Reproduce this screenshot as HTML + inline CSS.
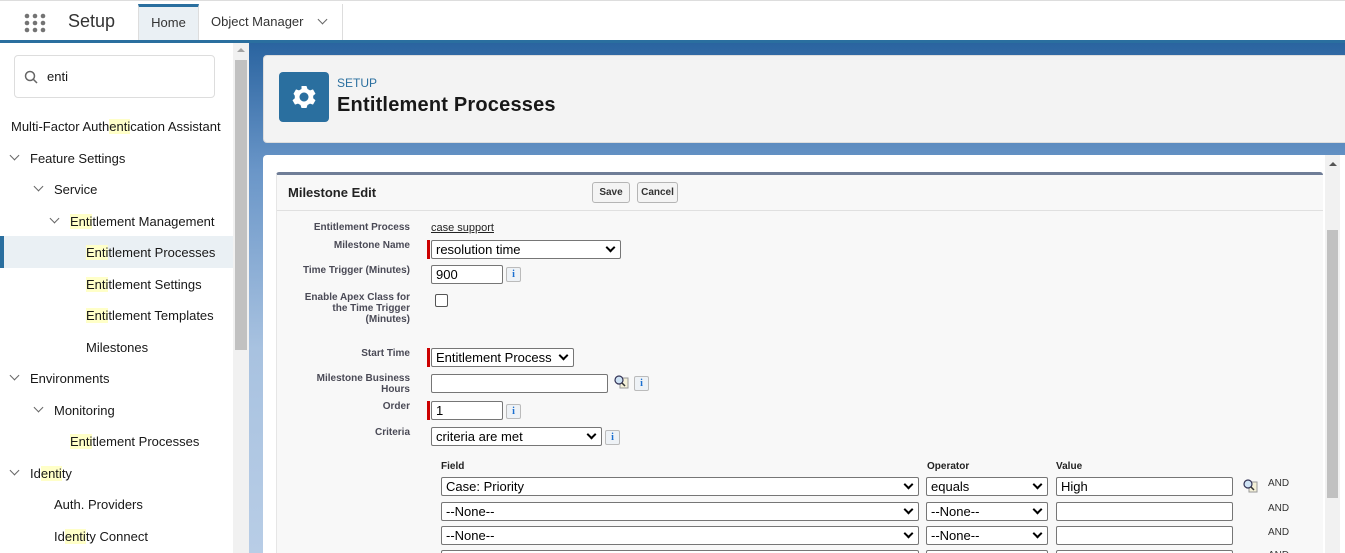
<!DOCTYPE html>
<html style="overflow:hidden;width:1345px;height:553px"><head><meta charset="utf-8"><style>
*{box-sizing:border-box;margin:0;padding:0}
body{width:1345px;height:553px;overflow:hidden;position:relative;font-family:"Liberation Sans",Arial,sans-serif;background:#fff}
.a{position:absolute}
.side{font-size:13px;color:#181818;white-space:nowrap}
.hl{background:#ffffc8}
.chev{position:absolute;width:7px;height:7px;border-right:1.3px solid #666;border-bottom:1.3px solid #666;transform:rotate(45deg)}
.lbl{position:absolute;right:935px;font-size:10px;font-weight:bold;color:#4a4a56;text-align:right;line-height:11px}
.sel,.inp{position:absolute;height:19px;border:1px solid #767676;background:#fff;font-size:13px;color:#000;padding:1px 4px;line-height:16px;border-radius:2px}
.sel::after{content:"";position:absolute;right:6px;top:3px;width:5px;height:5px;border-right:2px solid #000;border-bottom:2px solid #000;transform:rotate(45deg)}
.req{position:absolute;width:3px;height:19px;background:#c00}
.info{position:absolute;width:15px;height:15px;border:1px solid #bbb;border-radius:2px;background:#eef2f6;color:#1a6fd0;font:bold 10px "Liberation Serif",serif;text-align:center;line-height:13px}
.mag{position:absolute;width:16px;height:14px}
.and{position:absolute;left:1268px;font-size:10px;color:#333}
.hd{position:absolute;font-size:10px;font-weight:bold;color:#222}
</style></head><body>
<div class="a" style="left:0;top:0;width:1345px;height:3px;border-top:1px solid #ddd"></div>
<div class="a" style="left:24px;top:13px;width:22px;height:20px">
<svg width="22" height="20"><g fill="#747474"><circle cx="3" cy="3" r="2.3"/><circle cx="11" cy="3" r="2.3"/><circle cx="19" cy="3" r="2.3"/><circle cx="3" cy="10" r="2.3"/><circle cx="11" cy="10" r="2.3"/><circle cx="19" cy="10" r="2.3"/><circle cx="3" cy="17" r="2.3"/><circle cx="11" cy="17" r="2.3"/><circle cx="19" cy="17" r="2.3"/></g></svg></div>
<div class="a" style="left:68px;top:11px;font-size:18px;color:#333">Setup</div>
<div class="a" style="left:138px;top:4px;width:61px;height:36px;background:#eaf0f4;border-top:3px solid #2a6f9f;border-left:1px solid #ddd;border-right:1px solid #ddd;font-size:13px;color:#333;text-align:center;line-height:32px">Home</div>
<div class="a" style="left:199px;top:4px;width:144px;height:36px;border-right:1px solid #ddd;font-size:13px;color:#333;line-height:36px;padding-left:12px">Object Manager</div>
<div class="chev" style="left:319px;top:16px"></div>
<div class="a" style="left:0;top:40px;width:1345px;height:3px;background:#2a6f9f"></div>
<div class="a" style="left:14px;top:55px;width:201px;height:43px;border:1px solid #ddd;border-radius:4px"></div>
<svg class="a" style="left:24px;top:70px" width="14" height="14"><circle cx="6" cy="6" r="4.5" fill="none" stroke="#666" stroke-width="1.5"/><line x1="9.5" y1="9.5" x2="13" y2="13" stroke="#666" stroke-width="1.5"/></svg>
<div class="a side" style="left:47px;top:69px">enti</div>
<div class="a side" style="left:11px;top:119px">Multi-Factor Auth<span class="hl">enti</span>cation Assistant</div>
<div class="chev" style="left:11px;top:152px"></div><div class="a side" style="left:30px;top:151px">Feature Settings</div>
<div class="chev" style="left:35px;top:183px"></div><div class="a side" style="left:54px;top:182px">Service</div>
<div class="chev" style="left:51px;top:215px"></div><div class="a side" style="left:70px;top:214px"><span class="hl">Enti</span>tlement Management</div>
<div class="a" style="left:0;top:236px;width:233px;height:32px;background:#eaf0f4;border-left:4px solid #2a6f9f"></div>
<div class="a side" style="left:86px;top:245px"><span class="hl">Enti</span>tlement Processes</div>
<div class="a side" style="left:86px;top:277px"><span class="hl">Enti</span>tlement Settings</div>
<div class="a side" style="left:86px;top:308px"><span class="hl">Enti</span>tlement Templates</div>
<div class="a side" style="left:86px;top:340px">Milestones</div>
<div class="chev" style="left:11px;top:372px"></div><div class="a side" style="left:30px;top:371px">Environments</div>
<div class="chev" style="left:35px;top:404px"></div><div class="a side" style="left:54px;top:403px">Monitoring</div>
<div class="a side" style="left:70px;top:434px"><span class="hl">Enti</span>tlement Processes</div>
<div class="chev" style="left:11px;top:467px"></div><div class="a side" style="left:30px;top:466px">Id<span class="hl">enti</span>ty</div>
<div class="a side" style="left:54px;top:497px">Auth. Providers</div>
<div class="a side" style="left:54px;top:529px">Id<span class="hl">enti</span>ty Connect</div>
<div class="a" style="left:233px;top:43px;width:16px;height:510px;background:#f1f1f1"></div>
<div class="a" style="left:235px;top:60px;width:12px;height:290px;background:#c1c1c1"></div>
<div class="a" style="left:237px;top:48px;width:0;height:0;border-left:4px solid transparent;border-right:4px solid transparent;border-bottom:4px solid #a3a3a3"></div>
<div class="a" style="left:249px;top:43px;width:1096px;height:510px;background:linear-gradient(180deg,#2a64a0 0%,#6a96c8 25%,#a8c2e0 60%,#b8cde6 100%)"></div>
<div class="a" style="left:263px;top:55px;width:1090px;height:88px;background:#f3f3f3;border-radius:4px;border:1px solid #ddd"></div>
<div class="a" style="left:279px;top:72px;width:50px;height:50px;background:#2a6f9f;border-radius:4px"></div>
<svg class="a" style="left:289px;top:82px" width="30" height="30" viewBox="0 0 30 30"><path fill="#fff" fill-rule="evenodd" d="M12.5 4h5l1 3 2.5 1.4 3-1 2.5 4.3-2.3 2.1v2.4l2.3 2.1-2.5 4.3-3-1-2.5 1.4-1 3h-5l-1-3-2.5-1.4-3 1-2.5-4.3 2.3-2.1v-2.4L4.5 11.7 7 7.4l3 1 2.5-1.4zM15 10.5a4.5 4.5 0 1 0 0.01 0z"/></svg>
<div class="a" style="left:337px;top:76px;font-size:12px;color:#2a6f9f">SETUP</div>
<div class="a" style="left:337px;top:94px;font-size:20px;font-weight:bold;color:#181818;letter-spacing:0.2px">Entitlement Processes</div>
<div class="a" style="left:263px;top:155px;width:1082px;height:398px;background:#fff;border-radius:4px 0 0 0"></div>
<div class="a" style="left:1325px;top:155px;width:15px;height:398px;background:#f1f1f1"></div>
<div class="a" style="left:1327px;top:230px;width:11px;height:268px;background:#c1c1c1"></div>
<div class="a" style="left:1329px;top:162px;width:0;height:0;border-left:4px solid transparent;border-right:4px solid transparent;border-bottom:4px solid #555"></div>
<div class="a" style="left:276px;top:172px;width:1047px;height:381px;background:#f8f8f8;border-top:3px solid #6f7d97;border-left:1px solid #e6e6e6;border-radius:3px 3px 0 0"></div>
<div class="a" style="left:277px;top:210px;width:1046px;height:1px;background:#e0e0e0"></div>
<div class="a" style="left:288px;top:185px;font-size:13px;font-weight:bold;color:#222">Milestone Edit</div>
<div class="a" style="left:592px;top:182px;width:38px;height:21px;border:1px solid #b5b5b5;border-radius:3px;background:#f4f4f4;font-size:10px;font-weight:bold;color:#333;text-align:center;line-height:19px">Save</div>
<div class="a" style="left:637px;top:182px;width:41px;height:21px;border:1px solid #b5b5b5;border-radius:3px;background:#f4f4f4;font-size:10px;font-weight:bold;color:#333;text-align:center;line-height:19px">Cancel</div>
<div class="lbl" style="top:222px">Entitlement Process</div>
<div class="a" style="left:431px;top:222px;font-size:11px;color:#222;text-decoration:underline">case support</div>
<div class="lbl" style="top:240px">Milestone Name</div>
<div class="req" style="left:427px;top:240px"></div><div class="sel" style="left:431px;top:240px;width:190px">resolution time</div>
<div class="lbl" style="top:265px">Time Trigger (Minutes)</div>
<div class="inp" style="left:431px;top:265px;width:72px">900</div><div class="info" style="left:506px;top:267px">i</div>
<div class="lbl" style="top:292px">Enable Apex Class for<br>the Time Trigger<br>(Minutes)</div>
<div class="a" style="left:435px;top:294px;width:13px;height:13px;border:1px solid #555;border-radius:2px;background:#fff"></div>
<div class="lbl" style="top:348px">Start Time</div>
<div class="req" style="left:427px;top:348px"></div><div class="sel" style="left:431px;top:348px;width:143px">Entitlement Process</div>
<div class="lbl" style="top:373px">Milestone Business<br>Hours</div>
<div class="inp" style="left:431px;top:374px;width:177px"></div>
<svg class="mag" style="left:613px;top:375px" viewBox="0 0 16 14"><rect x="7" y="3" width="8" height="10" fill="#f4f0d8" stroke="#999"/><circle cx="6" cy="5" r="4" fill="#cfe3f5" stroke="#335" stroke-width="1.2"/><line x1="9" y1="8" x2="12" y2="11" stroke="#333" stroke-width="1.5"/></svg>
<div class="info" style="left:634px;top:376px">i</div>
<div class="lbl" style="top:401px">Order</div>
<div class="req" style="left:427px;top:401px"></div><div class="inp" style="left:431px;top:401px;width:72px">1</div><div class="info" style="left:506px;top:404px">i</div>
<div class="lbl" style="top:427px">Criteria</div>
<div class="sel" style="left:431px;top:427px;width:171px">criteria are met</div><div class="info" style="left:605px;top:430px">i</div>
<div class="hd" style="left:441px;top:461px">Field</div>
<div class="hd" style="left:927px;top:461px">Operator</div>
<div class="hd" style="left:1056px;top:461px">Value</div>
<div class="sel" style="left:441px;top:477px;width:478px">Case: Priority</div>
<div class="sel" style="left:926px;top:477px;width:122px">equals</div>
<div class="inp" style="left:1056px;top:477px;width:177px">High</div>
<svg class="mag" style="left:1242px;top:479px" viewBox="0 0 16 14"><rect x="7" y="3" width="8" height="10" fill="#f4f0d8" stroke="#999"/><circle cx="6" cy="5" r="4" fill="#cfe3f5" stroke="#335" stroke-width="1.2"/><line x1="9" y1="8" x2="12" y2="11" stroke="#333" stroke-width="1.5"/></svg>
<div class="and" style="top:478px">AND</div>
<div class="sel" style="left:441px;top:502px;width:478px">--None--</div>
<div class="sel" style="left:926px;top:502px;width:122px">--None--</div>
<div class="inp" style="left:1056px;top:502px;width:177px"></div>
<div class="and" style="top:503px">AND</div>
<div class="sel" style="left:441px;top:526px;width:478px">--None--</div>
<div class="sel" style="left:926px;top:526px;width:122px">--None--</div>
<div class="inp" style="left:1056px;top:526px;width:177px"></div>
<div class="and" style="top:527px">AND</div>
<div class="sel" style="left:441px;top:550px;width:478px"></div>
<div class="sel" style="left:926px;top:550px;width:122px"></div>
<div class="inp" style="left:1056px;top:550px;width:177px"></div>
<div class="and" style="top:550px">AND</div>
</body></html>
